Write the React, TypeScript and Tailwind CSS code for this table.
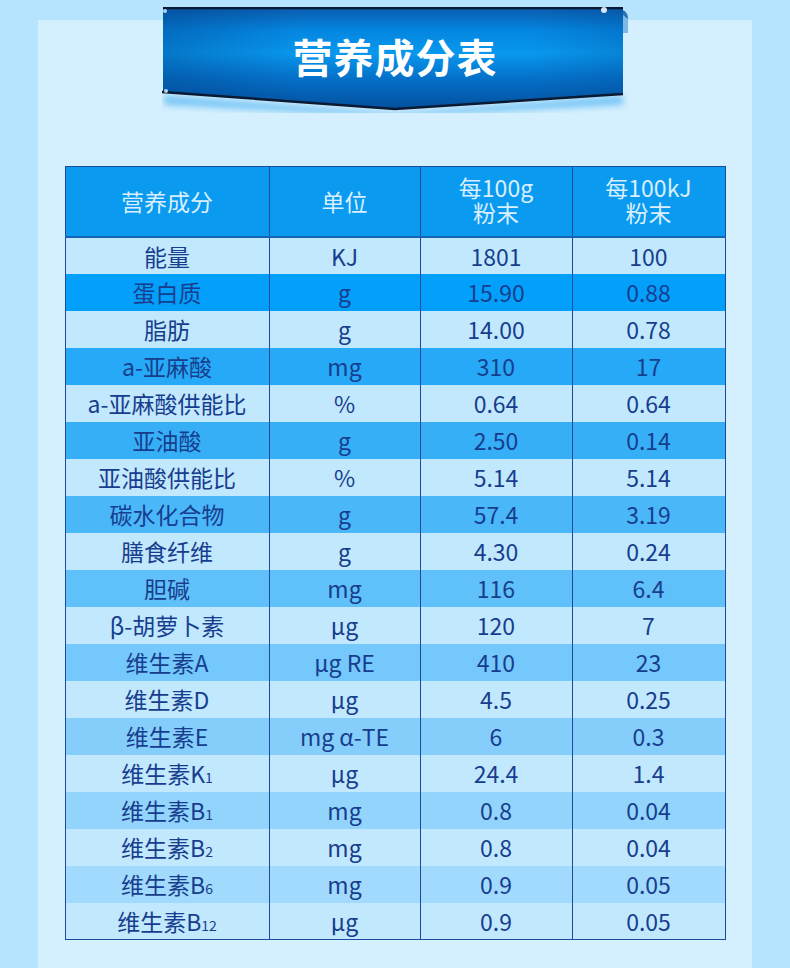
import type { ReactNode } from "react";

type Row = {
  name: ReactNode;
  unit: string;
  per100g: string;
  per100kj: string;
};

const sub = (s: string) => <span className="text-[14px] leading-none">{s}</span>;

const rows: Row[] = [
  { name: "能量", unit: "KJ", per100g: "1801", per100kj: "100" },
  { name: "蛋白质", unit: "g", per100g: "15.90", per100kj: "0.88" },
  { name: "脂肪", unit: "g", per100g: "14.00", per100kj: "0.78" },
  { name: "a-亚麻酸", unit: "mg", per100g: "310", per100kj: "17" },
  { name: "a-亚麻酸供能比", unit: "%", per100g: "0.64", per100kj: "0.64" },
  { name: "亚油酸", unit: "g", per100g: "2.50", per100kj: "0.14" },
  { name: "亚油酸供能比", unit: "%", per100g: "5.14", per100kj: "5.14" },
  { name: "碳水化合物", unit: "g", per100g: "57.4", per100kj: "3.19" },
  { name: "膳食纤维", unit: "g", per100g: "4.30", per100kj: "0.24" },
  { name: "胆碱", unit: "mg", per100g: "116", per100kj: "6.4" },
  { name: "β-胡萝卜素", unit: "μg", per100g: "120", per100kj: "7" },
  { name: "维生素A", unit: "μg RE", per100g: "410", per100kj: "23" },
  { name: "维生素D", unit: "μg", per100g: "4.5", per100kj: "0.25" },
  { name: "维生素E", unit: "mg α-TE", per100g: "6", per100kj: "0.3" },
  { name: <>维生素K{sub("1")}</>, unit: "μg", per100g: "24.4", per100kj: "1.4" },
  { name: <>维生素B{sub("1")}</>, unit: "mg", per100g: "0.8", per100kj: "0.04" },
  { name: <>维生素B{sub("2")}</>, unit: "mg", per100g: "0.8", per100kj: "0.04" },
  { name: <>维生素B{sub("6")}</>, unit: "mg", per100g: "0.9", per100kj: "0.05" },
  { name: <>维生素B{sub("12")}</>, unit: "μg", per100g: "0.9", per100kj: "0.05" },
];

// striped rows: the darker stripes fade out towards the bottom
const stripe = [
  "bg-[#03a0fb]",
  "bg-[#26a9f6]",
  "bg-[#36aff7]",
  "bg-[#4ab7f8]",
  "bg-[#60c0f9]",
  "bg-[#74c8fb]",
  "bg-[#85cefb]",
  "bg-[#92d4fc]",
  "bg-[#a1dafd]",
];

function Banner() {
  return (
    <div className="relative -mt-[13px] flex h-[106px] w-[467px] justify-center pt-[21px]">
      <svg
        className="absolute inset-0"
        width="467"
        height="106"
        viewBox="0 0 467 106"
        xmlns="http://www.w3.org/2000/svg"
      >
        <defs>
          <linearGradient id="rib" x1="0" y1="0" x2="0" y2="1">
            <stop offset="0" stopColor="#0a5cae" />
            <stop offset="0.22" stopColor="#0486e0" />
            <stop offset="0.45" stopColor="#0898ee" />
            <stop offset="0.7" stopColor="#0570c8" />
            <stop offset="1" stopColor="#03509e" />
          </linearGradient>
          <linearGradient id="side" x1="0" y1="0" x2="1" y2="0">
            <stop offset="0" stopColor="#003a80" stopOpacity="0.35" />
            <stop offset="0.3" stopColor="#003a80" stopOpacity="0" />
            <stop offset="0.8" stopColor="#003a80" stopOpacity="0" />
            <stop offset="1" stopColor="#003a80" stopOpacity="0.2" />
          </linearGradient>
          <filter id="glow" x="-10%" y="-20%" width="120%" height="160%">
            <feGaussianBlur stdDeviation="3" />
          </filter>
        </defs>
        <path d="M2 88 L233 106 L461 88 L461 98 L233 110 L2 98 Z" fill="#7cc8f6" filter="url(#glow)" />
        <path d="M455 2 Q466 2 466 12 L466 26 L460 26 Z" fill="#2c6fb4" />
        <path d="M461 8 L466 12 L466 26 L461 26 Z" fill="#7fb8e6" />
        <path d="M1 1 L461 1 L461 87 L233 102 L1 85 Z" fill="url(#rib)" />
        <path d="M1 1 L461 1 L461 87 L233 102 L1 85 Z" fill="url(#side)" />
        <path d="M1 1 L461 1" stroke="#0b1a33" strokeWidth="2.5" />
        <path d="M0 85 L233 102 L461 87" stroke="#0b1a33" strokeWidth="2.5" fill="none" />
        <circle cx="442" cy="3" r="3" fill="#ffffff" opacity="0.85" />
        <circle cx="3" cy="4" r="2" fill="#dff2ff" opacity="0.8" />
        <circle cx="4" cy="84" r="2" fill="#dff2ff" opacity="0.8" />
      </svg>
      <h1 className="relative text-[40px] font-bold leading-[56px] tracking-[1px] text-white">
        营养成分表
      </h1>
    </div>
  );
}

export default function App() {
  return (
    <div
      className="min-h-[968px] bg-[#b6e3fd] px-[38px] pt-[20px]"
      style={{ fontFamily: '"Noto Sans CJK SC", "Noto Sans", sans-serif' }}
    >
      <div className="flex min-h-[948px] flex-col items-center bg-[#d4effd]">
        <Banner />
        <table className="mt-[53px] w-[661px] table-fixed border-collapse border border-[#1d4a9c] text-center text-[23px] text-[#173e8e]">
          <colgroup>
            <col className="w-[204px]" />
            <col className="w-[151px]" />
            <col className="w-[152px]" />
            <col className="w-[153px]" />
          </colgroup>
          <thead>
            <tr className="h-[70px] border-b-2 border-[#1763b8] bg-[#0a9bf1] text-[#d9efff]">
              <th className="border-r border-[#1d4a9c] font-normal">营养成分</th>
              <th className="border-r border-[#1d4a9c] font-normal">单位</th>
              <th className="border-r border-[#1d4a9c] pb-[2px] font-normal leading-[25px]">
                每100g
                <br />
                粉末
              </th>
              <th className="pb-[2px] font-normal leading-[25px]">
                每100kJ
                <br />
                粉末
              </th>
            </tr>
          </thead>
          <tbody>
            {rows.map((r, i) => (
              <tr
                key={i}
                className={`h-[37px] leading-[26px] ${i % 2 === 0 ? "bg-[#c2e8fd]" : stripe[(i - 1) / 2]}`}
              >
                <td className="border-r border-[#1d4a9c] p-0">{r.name}</td>
                <td className="border-r border-[#1d4a9c] p-0">{r.unit}</td>
                <td className="border-r border-[#1d4a9c] p-0">{r.per100g}</td>
                <td className="p-0">{r.per100kj}</td>
              </tr>
            ))}
          </tbody>
        </table>
      </div>
    </div>
  );
}
